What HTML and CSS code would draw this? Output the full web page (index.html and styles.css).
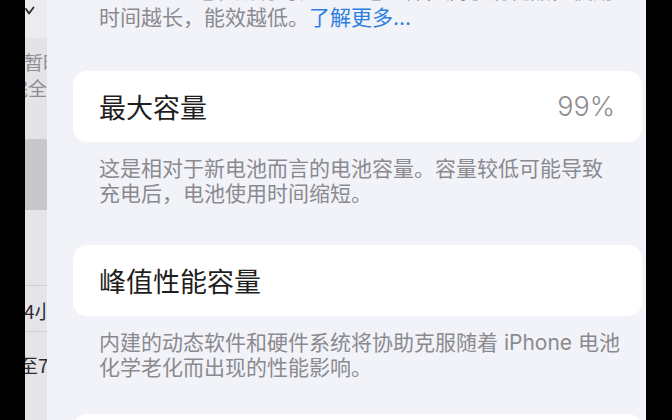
FILE: index.html
```html
<!DOCTYPE html>
<html lang="zh-CN">
<head>
<meta charset="utf-8">
<title>电池健康</title>
<link rel="stylesheet" href="styles.css">
</head>
<body>
<div class="screen">
  <div class="bezel"></div>
  <aside class="sidebar">
    <div class="side-row side-top">
      <svg class="chev" width="22" height="20" viewBox="0 0 22 20"><polyline points="1,9 4,13.5 8.5,7.5" fill="none" stroke="#2c2c2e" stroke-width="1.8" stroke-linecap="round" stroke-linejoin="round"/></svg>
    </div>
    <div class="side-row side-info">
      <p class="side-text gray t1">暂时关闭</p>
      <p class="side-text gray t2">完全充电</p>
    </div>
    <div class="side-row side-selected"></div>
    <div class="side-row side-plain"></div>
    <div class="side-row side-item">
      <p class="side-text dark t3">4小时</p>
    </div>
    <div class="side-row side-item side-last">
      <p class="side-text dark t4">至7</p>
    </div>
  </aside>
  <main class="main">
    <div class="stack">
      <p class="note note-lead">iPhone 电池和所有可充电电池一样，属于消耗品，使用时间越长，能效越低。<a class="link">了解更多...</a></p>

      <section class="card gap-top">
        <span class="label">最大容量</span>
        <span class="value">99%</span>
      </section>
      <p class="note note-after">这是相对于新电池而言的电池容量。容量较低可能导致充电后，电池使用时间缩短。</p>

      <section class="card gap-mid">
        <span class="label">峰值性能容量</span>
      </section>
      <p class="note note-after">内建的动态软件和硬件系统将协助克服随着 iPhone 电池化学老化而出现的性能影响。</p>

      <section class="card gap-tail">
        <span class="label">优化电池充电</span>
      </section>
    </div>
  </main>
  <div class="bezel bezel-right"></div>
</div>
</body>
</html>
```

FILE: styles.css
```css
html, body {
  margin: 0;
  padding: 0;
  background: #000;
}

body {
  font-family: Inter, "Noto Sans CJK SC", "Noto Sans", sans-serif;
}

.screen {
  display: flex;
  width: 672px;
  height: 420px;
  overflow: hidden;
}

.bezel {
  width: 25px;
  flex: none;
  background: #000;
}

.bezel-right {
  width: 26px;
}

.sidebar {
  width: 22px;
  flex: none;
  display: flex;
  flex-direction: column;
  overflow: hidden;
  background: #e4e4e9;
}

.side-row {
  flex: none;
  overflow: hidden;
}

.side-top {
  height: 38px;
  background: #ececf0;
}

.chev {
  display: block;
}

.side-info {
  height: 101px;
  background: #e3e3e8;
}

.side-selected {
  height: 71px;
  background: #c7c7cc;
}

.side-plain {
  height: 75px;
  background: #e4e4e9;
  border-bottom: 1.5px solid #cfcfd4;
}

.side-item {
  height: 45px;
  background: #e4e4e9;
  border-bottom: 1.5px solid #cfcfd4;
}

.side-last {
  flex: 1;
  border-bottom: none;
}

.side-text {
  margin: 0;
  font-family: "Noto Sans CJK SC", sans-serif;
  font-size: 19px;
  line-height: 26px;
  white-space: nowrap;
}

.gray { color: #8e8e93; }
.dark { color: #2c2c2e; }

.t1 { margin-top: 11px; margin-left: -1px; }
.t2 { margin-left: -16px; }
.t3 { margin-top: 12px; margin-left: -1px; }
.t4 { margin-top: 20px; margin-left: -6px; }

.main {
  flex: 1;
  background: #f2f3f9;
  padding: 0 4px 0 26px;
  overflow: hidden;
}

.stack {
  margin-top: -23px;
}

.note {
  margin: 0;
  padding: 0 19px 0 26px;
  font-size: 21px;
  line-height: 25px;
  color: #8a8a8f;
}

.note-lead {
  line-height: 27px;
}

.note-after {
  padding-top: 14px;
}

.link {
  color: #2b7fe0;
  text-decoration: none;
}

.card {
  height: 71px;
  box-sizing: border-box;
  padding: 0 26px;
  background: #ffffff;
  border-radius: 14px;
  display: flex;
  align-items: center;
  justify-content: space-between;
}

.gap-top { margin-top: 40px; }
.gap-mid { margin-top: 39px; }
.gap-tail { margin-top: 34px; }

.label {
  font-size: 27px;
  color: #1f1f21;
}

.value {
  font-size: 27px;
  font-weight: 300;
  color: #8e8e93;
  margin-right: 1px;
}
```
